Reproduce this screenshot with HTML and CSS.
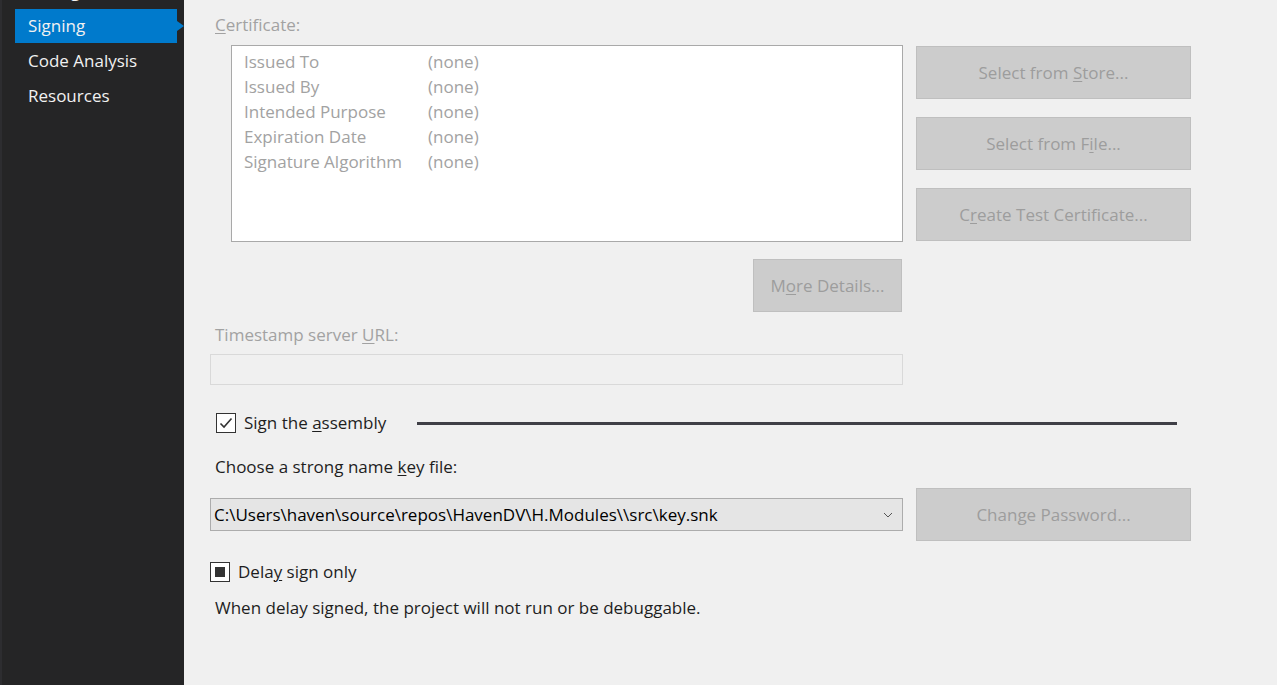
FILE: index.html
```html
<!DOCTYPE html>
<html lang="en">
<head>
    <meta charset="UTF-8">
    <title>Signing</title>
    <link rel="stylesheet" href="styles.css">
</head>
<body>
    <div class="sidebar">
        <ul class="nav">
            <li>Debug</li>
            <li class="active">Signing</li>
            <li>Code Analysis</li>
            <li>Resources</li>
        </ul>
    </div>

    <div class="main">
        <div class="label disabled"><u>C</u>ertificate:</div>

        <div class="cert-row">
            <div class="cert-box">
                <div class="cert-line"><span class="cert-key">Issued To</span><span>(none)</span></div>
                <div class="cert-line"><span class="cert-key">Issued By</span><span>(none)</span></div>
                <div class="cert-line"><span class="cert-key">Intended Purpose</span><span>(none)</span></div>
                <div class="cert-line"><span class="cert-key">Expiration Date</span><span>(none)</span></div>
                <div class="cert-line"><span class="cert-key">Signature Algorithm</span><span>(none)</span></div>
            </div>
            <div class="btn-column">
                <button class="btn wide">Select from <u>S</u>tore...</button>
                <button class="btn wide">Select from F<u>i</u>le...</button>
                <button class="btn wide">C<u>r</u>eate Test Certificate...</button>
            </div>
        </div>

        <div class="more-row">
            <button class="btn small">M<u>o</u>re Details...</button>
        </div>

        <div class="label disabled ts-label">Timestamp server <u>U</u>RL:</div>
        <div class="text-input"></div>

        <div class="sign-row">
            <span class="checkbox">
                <svg width="16" height="16" viewBox="0 0 16 16"><polyline points="2.5,8.5 6,12 13.5,3.5" fill="none" stroke="#333" stroke-width="1.6"/></svg>
            </span>
            <span class="check-text">Sign the <u>a</u>ssembly</span>
            <span class="divider"></span>
        </div>

        <div class="label key-label">Choose a strong name <u>k</u>ey file:</div>

        <div class="key-row">
            <div class="combo">
                <span>C:\Users\haven\source\repos\HavenDV\H.Modules\\src\key.snk</span>
                <svg width="10" height="6" viewBox="0 0 10 6"><polyline points="1,1 5,5 9,1" fill="none" stroke="#555" stroke-width="1"/></svg>
            </div>
            <button class="btn wide">Change Password...</button>
        </div>

        <div class="delay-row">
            <span class="checkbox partial"><span class="fill"></span></span>
            <span class="check-text">Dela<u>y</u> sign only</span>
        </div>

        <div class="label note">When delay signed, the project will not run or be debuggable.</div>
    </div>
</body>
</html>
```

FILE: styles.css
```css
body {
    margin: 0;
    height: 685px;
    overflow: hidden;
    display: flex;
    background: #f0f0f0;
    font-family: "Open Sans", "Noto Sans", sans-serif;
    font-size: 17px;
    color: #1e1e1e;
}
u {
    text-decoration-thickness: 1px;
    text-underline-offset: 2px;
}

/* left navigation */
.sidebar {
    width: 182px;
    flex-shrink: 0;
    background: #252526;
    border-left: 2px solid #2d2d30;
}
.nav {
    list-style: none;
    margin: -26px 0 0 0;
    padding: 0;
}
.nav li {
    position: relative;
    height: 34px;
    line-height: 34px;
    margin: 0 0 1px 13px;
    width: 149px;
    padding-left: 13px;
    color: #f1f1f1;
    font-size: 17px;
}
.nav li.active {
    background: #007acc;
}
.nav li.active::after {
    content: "";
    position: absolute;
    right: -7px;
    top: 12px;
    border-left: 7px solid #007acc;
    border-top: 5px solid transparent;
    border-bottom: 5px solid transparent;
}

/* page content */
.main {
    padding: 15px 0 0 26px;
    width: 981px;
}
.label {
    line-height: 20px;
    padding-left: 5px;
}
.disabled {
    color: #a2a2a2;
}
.cert-row {
    display: flex;
    margin-top: 10px;
}
.cert-box {
    margin-left: 21px;
    box-sizing: border-box;
    width: 672px;
    height: 197px;
    background: #fff;
    border: 1px solid #a9a9a9;
    padding: 6px 0 0 12px;
    color: #a2a2a2;
}
.cert-line {
    height: 25px;
    line-height: 20px;
}
.cert-key {
    display: inline-block;
    width: 184px;
}
.btn-column {
    display: flex;
    flex-direction: column;
    gap: 18px;
    margin: 1px 0 0 13px;
}
.btn {
    font-family: inherit;
    font-size: 17px;
    color: #9d9d9d;
    background: #cccccc;
    border: 1px solid #bfbfbf;
    height: 53px;
    padding: 0;
}
.btn.wide {
    width: 275px;
}
.btn.small {
    width: 149px;
}
.more-row {
    display: flex;
    justify-content: flex-end;
    width: 692px;
    margin-top: 17px;
}
.ts-label {
    margin-top: 13px;
}
.text-input {
    margin-top: 9px;
    width: 693px;
    height: 31px;
    box-sizing: border-box;
    border: 1px solid #d9d9d9;
}
.sign-row {
    display: flex;
    align-items: center;
    margin-top: 28px;
    height: 20px;
}
.checkbox {
    width: 20px;
    height: 20px;
    box-sizing: border-box;
    border: 1px solid #333;
    background: #fff;
    display: flex;
    align-items: center;
    justify-content: center;
    flex-shrink: 0;
}
.sign-row .checkbox {
    margin-left: 6px;
}
.check-text {
    margin-left: 8px;
    line-height: 20px;
}
.divider {
    flex: 1;
    height: 3px;
    background: #3f3f46;
    margin: 0 14px 0 31px;
}
.key-label {
    margin-top: 24px;
}
.key-row {
    display: flex;
    align-items: center;
    margin-top: 11px;
}
.combo {
    width: 693px;
    height: 33px;
    box-sizing: border-box;
    background: #e5e5e5;
    border: 1px solid #acacac;
    display: flex;
    align-items: center;
    justify-content: space-between;
    padding: 0 9px 0 3px;
    margin-right: 13px;
    color: #000;
}
.delay-row {
    display: flex;
    align-items: center;
    margin-top: 21px;
}
.checkbox.partial .fill {
    width: 10px;
    height: 10px;
    background: #333;
}
.note {
    margin-top: 16px;
}
```
